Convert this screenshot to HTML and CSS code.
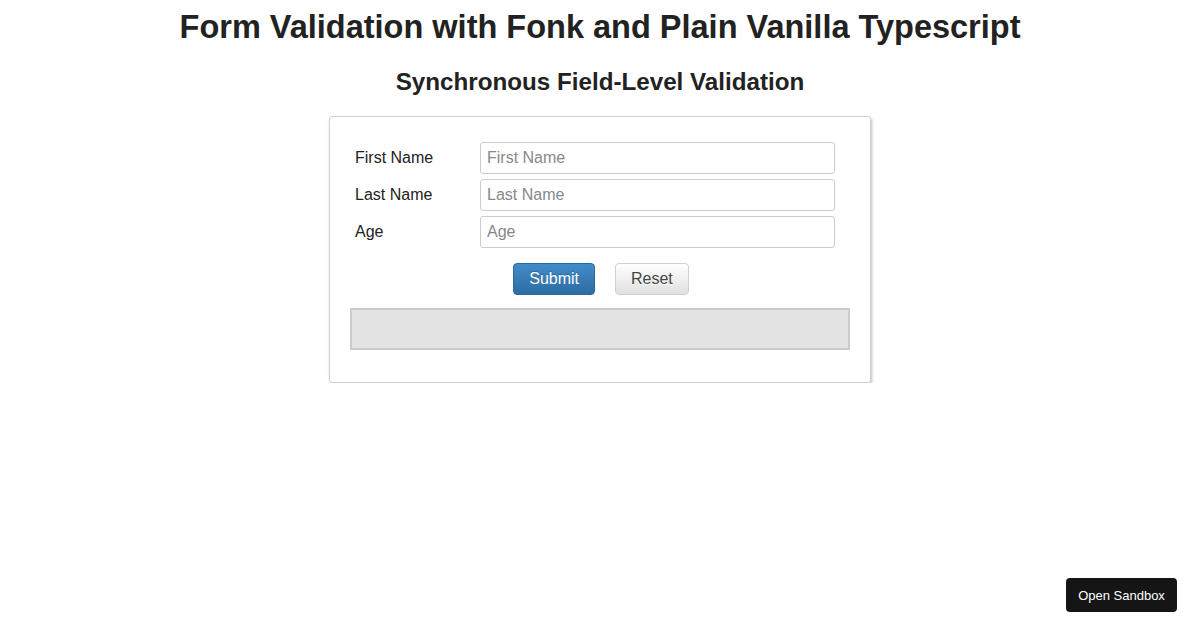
FILE: index.html
```html
<!DOCTYPE html>
<html>
<head>
<meta charset="utf-8">
<link rel="stylesheet" href="styles.css">
</head>
<body>
<h1 class="title">Form Validation with Fonk and Plain Vanilla Typescript</h1>
<h2 class="subtitle">Synchronous Field-Level Validation</h2>
<div class="card">
  <div class="fields">
    <div class="row">
      <label class="label">First Name</label>
      <input class="input" type="text" placeholder="First Name">
    </div>
    <div class="row">
      <label class="label">Last Name</label>
      <input class="input" type="text" placeholder="Last Name">
    </div>
    <div class="row">
      <label class="label">Age</label>
      <input class="input" type="text" placeholder="Age">
    </div>
  </div>
  <div class="actions">
    <button class="btn btn-primary">Submit</button>
    <button class="btn btn-default">Reset</button>
  </div>
  <div class="result"></div>
</div>
<a class="sandbox">Open Sandbox</a>
</body>
</html>
```
FILE: styles.css
```css
html, body {
  margin: 0;
  padding: 0;
  background: #fff;
  font-family: "Liberation Sans", Arial, sans-serif;
  color: #222;
}
.title {
  margin: 0;
  padding-top: 9px;
  text-align: center;
  font-size: 32.5px;
  line-height: 36px;
  font-weight: bold;
}
.subtitle {
  margin: 0;
  padding-top: 23px;
  text-align: center;
  font-size: 24.2px;
  line-height: 28px;
  font-weight: bold;
}
.card {
  width: 500px;
  margin: 20px auto 0;
  padding: 25px 20px 32px;
  border: 1px solid #d0d0d0;
  border-radius: 3px;
  box-shadow: 1px 2px 3px rgba(0,0,0,0.25);
}
.fields {
  display: flex;
  flex-direction: column;
  gap: 5px;
  padding-left: 5px;
}
.row {
  display: flex;
  align-items: center;
}
.label {
  width: 125px;
  font-size: 16px;
  color: #222;
}
.input {
  box-sizing: border-box;
  width: 355px;
  height: 32px;
  padding: 0 6px;
  margin: 0;
  border: 1px solid #ccc;
  border-radius: 3px;
  font-family: "Liberation Sans", Arial, sans-serif;
  font-size: 16px;
  color: #333;
  background: #fff;
}
.input::placeholder {
  color: #888;
}
.actions {
  display: flex;
  justify-content: center;
  gap: 20px;
  margin-top: 15px;
  padding-left: 2px;
}
.btn {
  box-sizing: border-box;
  height: 32px;
  padding: 0 15px;
  font-family: "Liberation Sans", Arial, sans-serif;
  font-size: 16px;
  border-radius: 4px;
  margin: 0;
}
.btn-primary {
  color: #fff;
  background: linear-gradient(#428bca, #2d6ca2);
  border: 1px solid #2b669a;
  text-shadow: 0 -1px 0 rgba(0,0,0,0.2);
}
.btn-default {
  color: #444;
  background: linear-gradient(#ffffff, #e0e0e0);
  border: 1px solid #d0d0d0;
  text-shadow: 0 1px 0 #fff;
}
.result {
  margin-top: 13px;
  height: 38px;
  background: #e3e3e3;
  border: 2px solid #cbcbcb;
}
.sandbox {
  position: fixed;
  right: 23px;
  bottom: 18px;
  width: 111px;
  height: 34px;
  box-sizing: border-box;
  display: flex;
  align-items: center;
  justify-content: center;
  background: #151515;
  color: #fff;
  border-radius: 4px;
  font-family: "Liberation Sans", Arial, sans-serif;
  font-size: 13px;
}
```
